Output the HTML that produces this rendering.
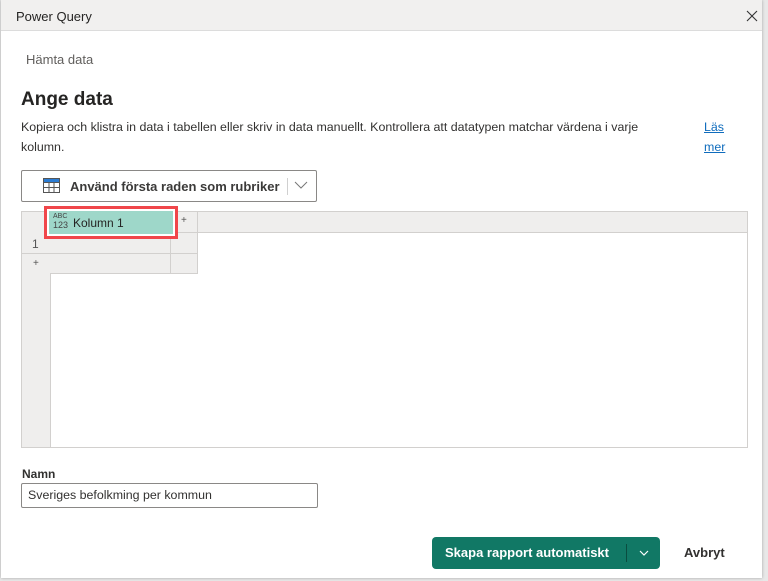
<!DOCTYPE html>
<html><head><meta charset="utf-8"><style>
*{box-sizing:border-box;margin:0;padding:0}
body{width:768px;height:581px;background:#e8e8e8;font-family:"Liberation Sans",sans-serif;position:relative;overflow:hidden;color:#252423}
.dlg{position:absolute;left:1px;top:0;width:761px;height:578px;background:#fff;box-shadow:0 0 3px rgba(0,0,0,.3)}
.a{position:absolute}
</style></head><body>
<div class="dlg">
<div class="a" style="left:0;top:0;width:761px;height:31px;background:#f1f0ef;border-bottom:1px solid #dcdcdc"></div>
<div class="a" style="left:15px;top:9px;font-size:13px">Power Query</div>
<svg class="a" style="left:745px;top:10px" width="12" height="12"><path d="M1 1L11 11M11 1L1 11" stroke="#333" stroke-width="1.1"/></svg>
<div class="a" style="left:25px;top:52px;font-size:13px;color:#605e5c">Hämta data</div>
<div class="a" style="left:20px;top:89px;font-size:19px;font-weight:bold;color:#252423">Ange data</div>
<div class="a" style="left:20px;top:117px;font-size:12.4px;line-height:20px;width:655px;color:#323130">Kopiera och klistra in data i tabellen eller skriv in data manuellt. Kontrollera att datatypen matchar värdena i varje kolumn.</div>
<div class="a" style="left:703px;top:117px;font-size:12.4px;line-height:20px;color:#0f6cbd;text-decoration:underline">Läs<br>mer</div>
<div class="a" style="left:20px;top:170px;width:296px;height:32px;border:1px solid #8a8886;border-radius:2px"></div>
<svg class="a" style="left:42px;top:178px" width="18" height="16"><rect x=".5" y=".5" width="16" height="14" fill="none" stroke="#555"/><path d="M.5 4.5h16M.5 9.5h16M6 .5v14M11 .5v14" stroke="#555"/><rect x="1" y="1" width="15" height="3" fill="#2b7cd3"/></svg>
<div class="a" style="left:69px;top:179px;font-size:13px;font-weight:bold;color:#3b3a39">Använd första raden som rubriker</div>
<div class="a" style="left:286px;top:178px;width:1px;height:17px;background:#d0d0d0"></div>
<svg class="a" style="left:293px;top:181px" width="14" height="9"><path d="M1 1L7 7L13 1" fill="none" stroke="#777"/></svg>
<div class="a" style="left:20px;top:211px;width:727px;height:237px;border:1px solid #d2d0ce"></div>
<div class="a" style="left:21px;top:212px;width:725px;height:21px;background:#efeeed;border-bottom:1px solid #d2d0ce"></div>
<div class="a" style="left:21px;top:212px;width:29px;height:235px;background:#efeeed;border-right:1px solid #d2d0ce"></div>
<div class="a" style="left:49px;top:233px;width:148px;height:41px;background:#efeeed;border-right:1px solid #d2d0ce;border-bottom:1px solid #d2d0ce"></div>
<div class="a" style="left:21px;top:253px;width:176px;height:1px;background:#d2d0ce"></div>
<div class="a" style="left:169px;top:212px;width:1px;height:62px;background:#d2d0ce"></div>
<div class="a" style="left:196px;top:212px;width:1px;height:21px;background:#d2d0ce"></div>
<div class="a" style="left:31px;top:237px;font-size:12px;color:#555">1</div>
<div class="a" style="left:32px;top:258px;font-size:10px;color:#555">+</div>
<div class="a" style="left:180px;top:215px;font-size:10px;color:#555">+</div>
<div class="a" style="left:43px;top:206px;width:134px;height:33px;border:3px solid #f0464a;background:#fff"></div>
<div class="a" style="left:48px;top:211px;width:124px;height:23px;background:#9ed7c9"></div>
<div class="a" style="left:52px;top:213px;font-size:7px;line-height:8px;color:#444">ABC<br><span style="font-size:9px">123</span></div>
<div class="a" style="left:72px;top:216px;font-size:12px;color:#252423">Kolumn 1</div>
<div class="a" style="left:21px;top:467px;font-size:12px;font-weight:bold;color:#323130">Namn</div>
<div class="a" style="left:20px;top:483px;width:297px;height:25px;border:1px solid #8a8886;border-radius:2px;padding:4px 6px;font-size:12.4px;color:#323130">Sveriges befolkming per kommun</div>
<div class="a" style="left:431px;top:537px;width:228px;height:32px;background:#117865;border-radius:4px"></div>
<div class="a" style="left:444px;top:545px;font-size:13px;font-weight:bold;color:#fff">Skapa rapport automatiskt</div>
<div class="a" style="left:625px;top:544px;width:1px;height:18px;background:#0a4d40"></div>
<svg class="a" style="left:638px;top:550px" width="10" height="6"><path d="M1 1L5 5L9 1" fill="none" stroke="#fff" stroke-width="1.2"/></svg>
<div class="a" style="left:683px;top:545px;font-size:13px;font-weight:bold;color:#323130">Avbryt</div>
</div>
</body></html>
